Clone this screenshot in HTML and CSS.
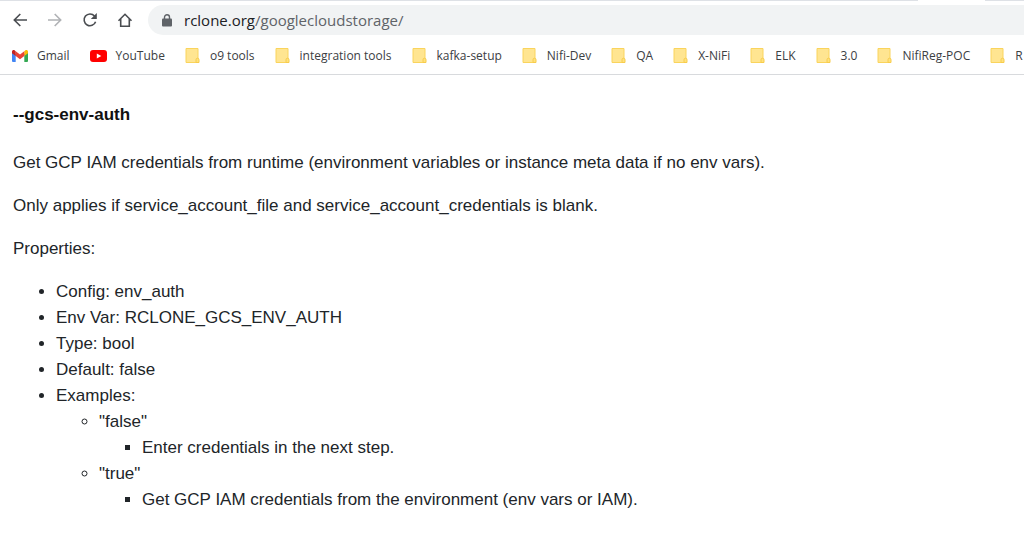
FILE: index.html
```html
<!DOCTYPE html>
<html lang="en">
<head>
  <meta charset="UTF-8">
  <meta name="viewport" content="width=device-width, initial-scale=1.0">
  <title>Google Cloud Storage</title>
  <link rel="stylesheet" href="styles.css">
</head>
<body>
  <svg class="defs" aria-hidden="true">
    <symbol id="folder" viewBox="0 0 15 17">
      <path d="M.5 1.500h12v14H.5z" fill="#ffe591" stroke="#fad45c"/>
      <path d="M10.500 15.500V12.700a1.500 1.500 0 0 1 3 0V15.500z" fill="#ffe27c" stroke="#f8cc4c"/>
    </symbol>
  </svg>

  <header class="browser">
    <div class="tabstrip"><div class="tab"></div></div>
    <div class="toolbar">
      <div class="controls">
        <button class="nav" aria-label="Back">
          <svg viewBox="0 0 16 16"><path d="M15 8H2.500M8.300 2 2.300 8l6 6"/></svg>
        </button>
        <button class="nav" aria-label="Forward" disabled>
          <svg viewBox="0 0 16 16"><path d="M1 8h12.500M7.700 2l6 6-6 6"/></svg>
        </button>
        <button class="nav" aria-label="Reload">
          <svg viewBox="0 0 16 16"><path d="M12.500 4A5.900 5.900 0 1 0 13.600 9.800"/><path class="solid" d="M14.800 1v6H8.800z"/></svg>
        </button>
        <button class="nav" aria-label="Home">
          <svg viewBox="0 0 16 16"><path d="M1.500 8.700 8 2.300l6.500 6.400M3.700 7v7.200h8.600V7"/></svg>
        </button>
      </div>
      <div class="address">
        <svg class="lock" viewBox="0 0 10 13"><path d="M2.500 5V3.300a2.500 2.500 0 0 1 5 0V5" fill="none" stroke="#5f6368" stroke-width="1.400"/><rect y="4.500" width="10" height="8" rx="1" fill="#5f6368"/></svg>
        <a class="url" href="#gcs-env-auth"><span class="host">rclone.org</span>/googlecloudstorage/</a>
      </div>
    </div>
    <nav class="bookmarks">
      <a href="#"><svg class="gmail" viewBox="0 0 16 12"><path d="M0 1.500V11a1 1 0 0 0 1 1h2.700V4z" fill="#4285f4"/><path d="M16 1.500V11a1 1 0 0 1-1 1h-2.700V4z" fill="#34a853"/><path d="M12.300 1.200V6L16 3.200V1.700C16 .2 14.300-.5 13.200.5z" fill="#fbbc04"/><path d="M3.700 1.200 8 4.400l4.300-3.200V6L8 9.200 3.700 6z" fill="#ea4335"/><path d="M0 1.700v1.500L3.700 6V1.200L2.800.5C1.700-.5 0 .2 0 1.700z" fill="#c5221f"/></svg>Gmail</a>
      <a href="#"><svg class="youtube" viewBox="0 0 17 12"><rect width="17" height="12" rx="3" fill="#f00"/><path d="M6.800 3.400v5.200L11.300 6z" fill="#fff"/></svg>YouTube</a>
      <a href="#"><svg class="folder"><use href="#folder"/></svg>o9 tools</a>
      <a href="#"><svg class="folder"><use href="#folder"/></svg>integration tools</a>
      <a href="#"><svg class="folder"><use href="#folder"/></svg>kafka-setup</a>
      <a href="#"><svg class="folder"><use href="#folder"/></svg>Nifi-Dev</a>
      <a href="#"><svg class="folder"><use href="#folder"/></svg>QA</a>
      <a href="#"><svg class="folder"><use href="#folder"/></svg>X-NiFi</a>
      <a href="#"><svg class="folder"><use href="#folder"/></svg>ELK</a>
      <a href="#"><svg class="folder"><use href="#folder"/></svg>3.0</a>
      <a href="#"><svg class="folder"><use href="#folder"/></svg>NifiReg-POC</a>
      <a href="#"><svg class="folder"><use href="#folder"/></svg>R</a>
    </nav>
  </header>

  <main class="content">
    <h4 id="gcs-env-auth">--gcs-env-auth</h4>
    <p>Get GCP IAM credentials from runtime (environment variables or instance meta data if no env vars).</p>
    <p>Only applies if service_account_file and service_account_credentials is blank.</p>
    <p>Properties:</p>
    <ul>
      <li>Config: env_auth</li>
      <li>Env Var: RCLONE_GCS_ENV_AUTH</li>
      <li>Type: bool</li>
      <li>Default: false</li>
      <li>Examples:
        <ul>
          <li>"false"
            <ul>
              <li>Enter credentials in the next step.</li>
            </ul>
          </li>
          <li>"true"
            <ul>
              <li>Get GCP IAM credentials from the environment (env vars or IAM).</li>
            </ul>
          </li>
        </ul>
      </li>
    </ul>
  </main>
</body>
</html>
```
FILE: styles.css
```css
* {
  box-sizing: border-box;
}

body {
  margin: 0;
  background-color: #fff;
  color: #212529;
  font-family: "Liberation Sans", Arial, sans-serif;
  font-size: 17px;
  line-height: 26px;
}

.defs {
  display: none;
}

.browser {
  border-bottom: 1px solid #d8dadd;
  font-family: "Open Sans", "Noto Sans", sans-serif;
  overflow: hidden;
}

.tabstrip {
  display: flex;
  justify-content: flex-end;
  height: 1px;
  padding-right: 39px;
  background-color: #dee1e6;
}

.tab {
  width: 67px;
  background-color: #fff;
}

.toolbar {
  display: flex;
  align-items: center;
  gap: 15px;
  padding: 4px 0 0 12px;
}

.controls {
  display: flex;
  gap: 19px;
}

.nav {
  display: flex;
  padding: 0;
  border: 0;
  background: none;
  color: #4a4d51;
}

.nav:disabled {
  color: #b0b2b5;
}

.nav svg {
  width: 16px;
  height: 16px;
  fill: none;
  stroke: currentColor;
  stroke-width: 1.6;
}

.nav .solid {
  fill: currentColor;
  stroke: none;
}

.address {
  display: flex;
  flex: 1;
  align-items: center;
  gap: 12px;
  height: 30px;
  padding-left: 14px;
  border-radius: 15px 0 0 15px;
  background-color: #f1f3f4;
}

.lock {
  width: 10px;
  height: 13px;
}

.url {
  color: #5f6368;
  font-size: 15px;
  text-decoration: none;
}

.host {
  color: #202124;
}

.bookmarks {
  display: flex;
  align-items: center;
  gap: 20px;
  height: 39px;
  padding: 2px 0 0 12px;
}

.bookmarks a {
  display: flex;
  flex-shrink: 0;
  align-items: center;
  gap: 9px;
  color: #3c4043;
  font-size: 12px;
  text-decoration: none;
}

.gmail {
  width: 16px;
  height: 12px;
}

.youtube {
  width: 17px;
  height: 12px;
}

.folder {
  width: 16px;
  height: 17px;
}

.content {
  padding: 27px 13px;
}

h4 {
  margin: 0 0 22px;
  color: #111;
  font-size: 17px;
}

p {
  margin: 0 0 17px;
}

ul {
  margin: 0;
  padding-left: 43px;
}
```
